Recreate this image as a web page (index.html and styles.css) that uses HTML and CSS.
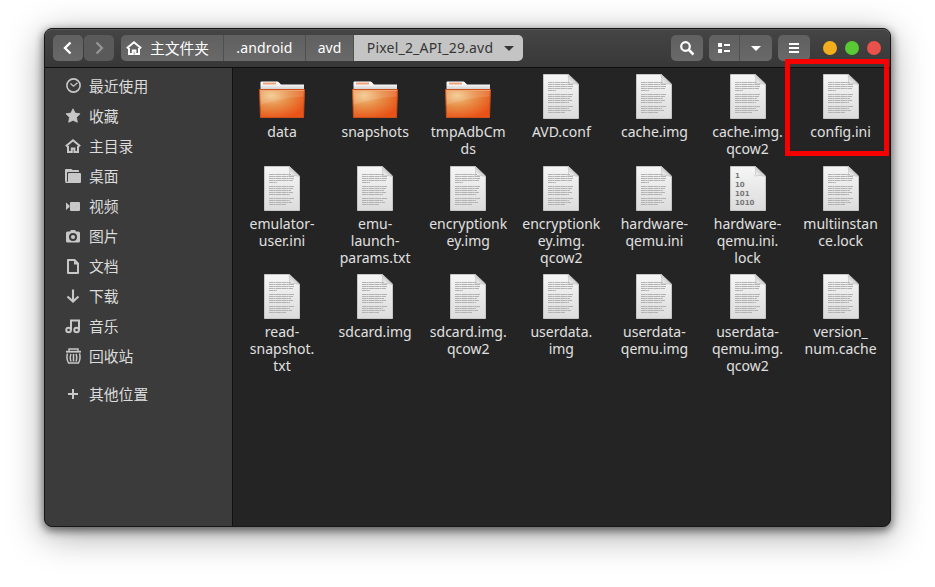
FILE: index.html
```
<!DOCTYPE html>
<html lang="zh-CN">
<head>
	<meta charset="utf-8">
	<title>Pixel_2_API_29.avd</title>
	<link rel="stylesheet" href="styles.css">
</head>
<body>
	<svg class="defs" width="0" height="0">
		<defs>
			<linearGradient id="paper" x1="0" y1="0" x2="0" y2="1">
				<stop offset="0" stop-color="#f6f6f6"/>
				<stop offset="1" stop-color="#dcdcdc"/>
			</linearGradient>
			<linearGradient id="fold" x1="0" y1="1" x2="1" y2="0">
				<stop offset="0" stop-color="#fff"/>
				<stop offset="0.5" stop-color="#d0d0d0"/>
				<stop offset="1" stop-color="#fff"/>
			</linearGradient>
			<linearGradient id="tab" x1="0" y1="0" x2="0" y2="1">
				<stop offset="0.2" stop-color="#fff"/>
				<stop offset="1" stop-color="#c4c4c4"/>
			</linearGradient>
			<radialGradient id="orange" cx="0.26" cy="0.22" r="0.85">
				<stop offset="0" stop-color="#f3c88c"/>
				<stop offset="0.45" stop-color="#e78f48"/>
				<stop offset="1" stop-color="#ea5318"/>
			</radialGradient>
			<symbol id="sheet" viewBox="0 0 36 45">
				<path d="M.5.5h25l10 9.500v34.500H.5z" fill="url(#paper)" stroke="#c6c6c6"/>
				<path d="M25 .5q1.500 5 0 9.500 5-1.500 10.500.5z" fill="url(#fold)" stroke="#bbb" stroke-width=".6"/>
			</symbol>
			<symbol id="doc" viewBox="0 0 36 45">
				<use href="#sheet"/>
				<path d="M5 8.500h22M5 10.500h25M5 12.500h25M5 14.500h24M5 16.500h8M5 20.500h25M5 22.500h24M5 24.500h22M5 26.500h24M5 28.500h21M5 32.500h25M5 34.500h21M5 36.500h23M5 38.500h17" stroke="#b2b2b2" stroke-dasharray="4 .3 2 .3 6 .4"/>
			</symbol>
			<symbol id="folder" viewBox="0 0 46 38">
				<path d="M1.500 10V1.500q0-1 1-1h16q1 0 2 1.500l1.500 1.500h23V10z" fill="url(#tab)"/>
				<path d="M4 2.500h13" stroke="#f0a078" stroke-width="2"/>
				<path d="M.5 8.500h45L44.500 36.500h-43z" fill="url(#orange)" stroke="#c9501c"/>
				<path d="M1.500 9.500h43v6Q20 17 1.500 24z" fill="#fff" opacity=".12"/>
				<path d="M1 9.500h44" stroke="#f4a978" opacity=".8"/>
			</symbol>
			<symbol id="home" viewBox="0 0 16 16">
				<path d="M.8 8.300 8 2.200l7.200 6.100" fill="none" stroke="currentColor" stroke-width="2"/>
				<path d="M3 8v6h3.800v-3.500h2.600V14H13V8" fill="none" stroke="currentColor" stroke-width="2"/>
			</symbol>
		</defs>
	</svg>

	<div class="window">
		<div class="header">
			<div class="group nav">
				<button class="btn nav-btn"><svg class="icon" viewBox="0 0 16 16"><path d="M10.500 2.500 5 8l5.500 5.500" fill="none" stroke="currentColor" stroke-width="2.400"/></svg></button>
				<button class="btn nav-btn disabled"><svg class="icon" viewBox="0 0 16 16"><path d="M5.500 2.500 11 8l-5.500 5.500" fill="none" stroke="currentColor" stroke-width="2.200"/></svg></button>
			</div>
			<div class="group path">
				<button class="btn crumb-home"><svg class="icon"><use href="#home"/></svg><span>主文件夹</span></button>
				<button class="btn crumb-android">.android</button>
				<button class="btn crumb-avd">avd</button>
				<button class="btn crumb-current"><span>Pixel_2_API_29.avd</span><svg class="caret" viewBox="0 0 10 5"><path d="M0 0h10L5 5z" fill="currentColor"/></svg></button>
			</div>
			<div class="group search">
				<button class="btn"><svg class="icon" viewBox="0 0 16 16"><circle cx="6.500" cy="6.500" r="4.300" fill="none" stroke="currentColor" stroke-width="2.200"/><path d="m9.500 9.500 5 5" stroke="currentColor" stroke-width="2.500"/></svg></button>
			</div>
			<div class="group view">
				<button class="btn view-list"><svg class="icon" viewBox="0 0 16 16"><path d="M2 3h4v4H2zM2 9h4v4H2zM8 4h6v2H8zM8 10h6v2H8z" fill="currentColor"/></svg></button>
				<button class="btn view-menu"><svg class="caret" viewBox="0 0 10 5"><path d="M0 0h10L5 5z" fill="currentColor"/></svg></button>
			</div>
			<div class="group menu">
				<button class="btn"><svg class="icon" viewBox="0 0 16 16"><path d="M3 4h10M3 8h10M3 12h10" stroke="currentColor" stroke-width="2"/></svg></button>
			</div>
			<div class="controls">
				<span class="dot minimize"></span>
				<span class="dot maximize"></span>
				<span class="dot close"></span>
			</div>
		</div>

		<div class="main">
			<div class="sidebar">
				<div class="place"><svg class="icon" viewBox="0 0 16 16"><circle cx="8.500" cy="7.500" r="6.600" fill="none" stroke="currentColor" stroke-width="1.600"/><path d="m5.500 5.500 3 2.700 4-3.500" fill="none" stroke="currentColor" stroke-width="1.300"/></svg><span>最近使用</span></div>
				<div class="place"><svg class="icon" viewBox="0 0 16 16"><path d="m8 .8 2.100 4.300 4.900.7-3.500 3.500.8 5L8 12.200l-4.300 2.100.8-5L1 5.800l4.900-.7z" fill="currentColor" stroke="currentColor" stroke-width=".8" stroke-linejoin="round"/></svg><span>收藏</span></div>
				<div class="place"><svg class="icon"><use href="#home"/></svg><span>主目录</span></div>
				<div class="place"><svg class="icon" viewBox="0 0 16 16"><path d="M0 13.500V2q0-1 1-1h5q1 0 1.500 1H13q1 0 1 1v1H3q-1 0-1 1v8.500z" fill="currentColor"/><path d="M3 6q0-1 1-1h11q1 0 1 1v7.500q0 1.500-1 1.500H1.500Q0 15 0 13.500h3z" fill="currentColor"/></svg><span>桌面</span></div>
				<div class="place"><svg class="icon" viewBox="0 0 16 16"><path d="M1 4.500 4.500 7.500V9L1 12zM6 4h8q1 0 1 1v7q0 1-1 1H6q-1 0-1-1V5q0-1 1-1z" fill="currentColor"/></svg><span>视频</span></div>
				<div class="place"><svg class="icon" viewBox="0 0 16 16"><path fill-rule="evenodd" d="M5 3.500 6 2h4l1 1.500h2.500Q15 3.500 15 5v8q0 1.500-1.500 1.500h-11Q1 14.500 1 13V5q0-1.500 1.500-1.500zM8 5a4 4 0 1 0 0 8 4 4 0 0 0 0-8z" fill="currentColor"/><circle cx="8" cy="9" r="2.100" fill="currentColor"/></svg><span>图片</span></div>
				<div class="place"><svg class="icon" viewBox="0 0 16 16"><path d="M3 2h6.500L13 5.500V15H3z" fill="none" stroke="currentColor" stroke-width="2" stroke-linejoin="round"/><path d="M9 1.500v5h5z" fill="currentColor"/></svg><span>文档</span></div>
				<div class="place"><svg class="icon" viewBox="0 0 16 16"><path d="M8 1.500v12M2.500 8.500 8 13.500l5.500-5" fill="none" stroke="currentColor" stroke-width="2.100"/></svg><span>下载</span></div>
				<div class="place"><svg class="icon" viewBox="0 0 16 16"><path d="M6 12V2.500h8V12" fill="none" stroke="currentColor" stroke-width="2"/><circle cx="3.600" cy="12" r="2.300" fill="none" stroke="currentColor" stroke-width="2"/><circle cx="11.600" cy="12" r="2.300" fill="none" stroke="currentColor" stroke-width="2"/></svg><span>音乐</span></div>
				<div class="place"><svg class="icon" viewBox="0 0 16 16"><path d="M4 3V1h9v2" fill="none" stroke="currentColor" stroke-width="1.400"/><path d="M1 3.700h15" stroke="currentColor" stroke-width="1.800"/><path d="M2.500 5.500q-1.500 5 1 9.500h10q2.500-4.500 1-9.500M6 6q-1.500 3.500 0 7.500M8.500 6v7.500M11 6q1.500 3.500 0 7.500" fill="none" stroke="currentColor" stroke-width="1.500"/></svg><span>回收站</span></div>
				<div class="place other"><svg class="icon" viewBox="0 0 16 16"><path d="M8 3v10M3 8h10" stroke="currentColor" stroke-width="2"/></svg><span>其他位置</span></div>
			</div>

			<div class="files">
				<div class="file"><svg class="folder"><use href="#folder"/></svg><span>data</span></div>
				<div class="file"><svg class="folder"><use href="#folder"/></svg><span>snapshots</span></div>
				<div class="file"><svg class="folder"><use href="#folder"/></svg><span>tmpAdbCm<br>ds</span></div>
				<div class="file"><svg class="doc"><use href="#doc"/></svg><span>AVD.conf</span></div>
				<div class="file"><svg class="doc"><use href="#doc"/></svg><span>cache.img</span></div>
				<div class="file"><svg class="doc"><use href="#doc"/></svg><span>cache.img.<br>qcow2</span></div>
				<div class="file"><svg class="doc"><use href="#doc"/></svg><span>config.ini</span></div>

				<div class="file"><svg class="doc"><use href="#doc"/></svg><span>emulator-<br>user.ini</span></div>
				<div class="file"><svg class="doc"><use href="#doc"/></svg><span>emu-<br>launch-<br>params.txt</span></div>
				<div class="file"><svg class="doc"><use href="#doc"/></svg><span>encryptionk<br>ey.img</span></div>
				<div class="file"><svg class="doc"><use href="#doc"/></svg><span>encryptionk<br>ey.img.<br>qcow2</span></div>
				<div class="file"><svg class="doc"><use href="#doc"/></svg><span>hardware-<br>qemu.ini</span></div>
				<div class="file"><svg class="doc binary" viewBox="0 0 36 45"><use href="#sheet"/><text x="5" y="11.500">1</text><text x="5" y="20.500">10</text><text x="5" y="29.500">101</text><text x="5" y="38.500">1010</text></svg><span>hardware-<br>qemu.ini.<br>lock</span></div>
				<div class="file"><svg class="doc"><use href="#doc"/></svg><span>multiinstan<br>ce.lock</span></div>

				<div class="file"><svg class="doc"><use href="#doc"/></svg><span>read-<br>snapshot.<br>txt</span></div>
				<div class="file"><svg class="doc"><use href="#doc"/></svg><span>sdcard.img</span></div>
				<div class="file"><svg class="doc"><use href="#doc"/></svg><span>sdcard.img.<br>qcow2</span></div>
				<div class="file"><svg class="doc"><use href="#doc"/></svg><span>userdata.<br>img</span></div>
				<div class="file"><svg class="doc"><use href="#doc"/></svg><span>userdata-<br>qemu.img</span></div>
				<div class="file"><svg class="doc"><use href="#doc"/></svg><span>userdata-<br>qemu.img.<br>qcow2</span></div>
				<div class="file"><svg class="doc"><use href="#doc"/></svg><span>version_<br>num.cache</span></div>
			</div>
		</div>
		<div class="highlight"></div>
	</div>
</body>
</html>
```
FILE: styles.css
```
*{
	box-sizing: border-box;
}
body{
	margin: 0;
	padding: 28px 44px 60px;
	height: 587px;
	overflow: hidden;
	background: #fff;
	font-family: "Noto Sans", "Noto Sans CJK SC", sans-serif;
	font-size: 14px;
}
.defs{
	position: absolute;
}
.window{
	position: relative;
	display: flex;
	flex-direction: column;
	width: 847px;
	height: 499px;
	border: 1px solid #161616;
	border-radius: 8px;
	background: #242424;
	box-shadow: 0 3px 9px 1px rgba(0,0,0,0.5), 0 8px 36px rgba(0,0,0,0.36);
}

/* header bar */
.header{
	display: flex;
	height: 39px;
	padding: 6px 9px 0 8px;
	border-bottom: 1px solid #0e0e0e;
	border-radius: 7px 7px 0 0;
	background: linear-gradient(#454545, #383838);
	box-shadow: inset 0 1px #5a5a5a;
}
.group{
	display: flex;
	gap: 1px;
	height: 26px;
}
.btn{
	display: flex;
	align-items: center;
	justify-content: center;
	width: 100%;
	height: 26px;
	padding: 0;
	border: 0;
	background: linear-gradient(#606060, #696969);
	color: #fff;
	font: inherit;
	line-height: 24px;
	white-space: nowrap;
}
.btn:first-child{
	border-radius: 5px 0 0 5px;
}
.btn:last-child{
	border-radius: 0 5px 5px 0;
}
.btn:only-child{
	border-radius: 5px;
}
.icon{
	flex: none;
	width: 16px;
	height: 16px;
}
.caret{
	width: 10px;
	height: 5px;
}
.nav{
	width: 61px;
	margin-right: 7px;
}
.nav .btn{
	border-radius: 5px;
}
.nav .disabled{
	color: #969696;
	background: #5a5a5a;
}
.path{
	width: 402px;
	background: #505050;
	border-radius: 5px;
}
.crumb-home{
	width: 102px;
	gap: 8px;
	padding-right: 9px;
	font-size: 14.8px;
}
.crumb-android{
	width: 81px;
	letter-spacing: 0.15px;
}
.crumb-avd{
	width: 47px;
}
.crumb-current{
	width: 169px;
	gap: 11px;
	padding-left: 4px;
	background: #c4c4c4;
	color: #363636;
	letter-spacing: 0.2px;
}
.search{
	width: 32px;
	margin-left: auto;
}
.view{
	width: 63px;
	margin-left: 6px;
	background: #505050;
	border-radius: 5px;
}
.view-list{
	width: 30px;
}
.view-menu{
	width: 32px;
}
.menu{
	width: 32px;
	margin-left: 6px;
}
.controls{
	display: flex;
	gap: 8px;
	padding: 6px 0 0 13px;
}
.dot{
	width: 14px;
	height: 14px;
	border-radius: 50%;
}
.minimize{
	background: #f2ae1c;
}
.maximize{
	background: #5ac936;
}
.close{
	background: #e9524b;
}

/* body */
.main{
	display: flex;
	flex: 1;
	min-height: 0;
}
.sidebar{
	width: 188px;
	padding: 3px 0 0 20px;
	border-right: 1px solid #121212;
	border-radius: 0 0 0 7px;
	background: #3b3b3b;
	color: #dcdcdc;
	font-size: 14.8px;
}
.place{
	display: flex;
	align-items: center;
	gap: 8px;
	height: 30px;
}
.place span{
	padding-bottom: 2px;
}
.place .icon{
	color: #c8c8c8;
}
.other{
	margin-top: 8px;
}
.files{
	display: grid;
	grid-template-columns: repeat(7, 93.1px);
	grid-template-rows: 92px 108px auto;
	align-content: start;
	padding: 6px 0 0 2.500px;
	color: #e0e0e0;
}
.file{
	display: flex;
	flex-direction: column;
	align-items: center;
	line-height: 17px;
	text-align: center;
	white-space: nowrap;
}
.file span{
	margin-top: 4px;
}
.doc{
	width: 36px;
	height: 45px;
}
.folder{
	width: 46px;
	height: 38px;
	margin-top: 7px;
}
.binary text{
	font: bold 7px "DejaVu Sans", sans-serif;
	fill: #777;
}
.highlight{
	position: absolute;
	top: 30px;
	left: 740px;
	width: 104px;
	height: 97px;
	border: 5.500px solid #f80000;
}
```
